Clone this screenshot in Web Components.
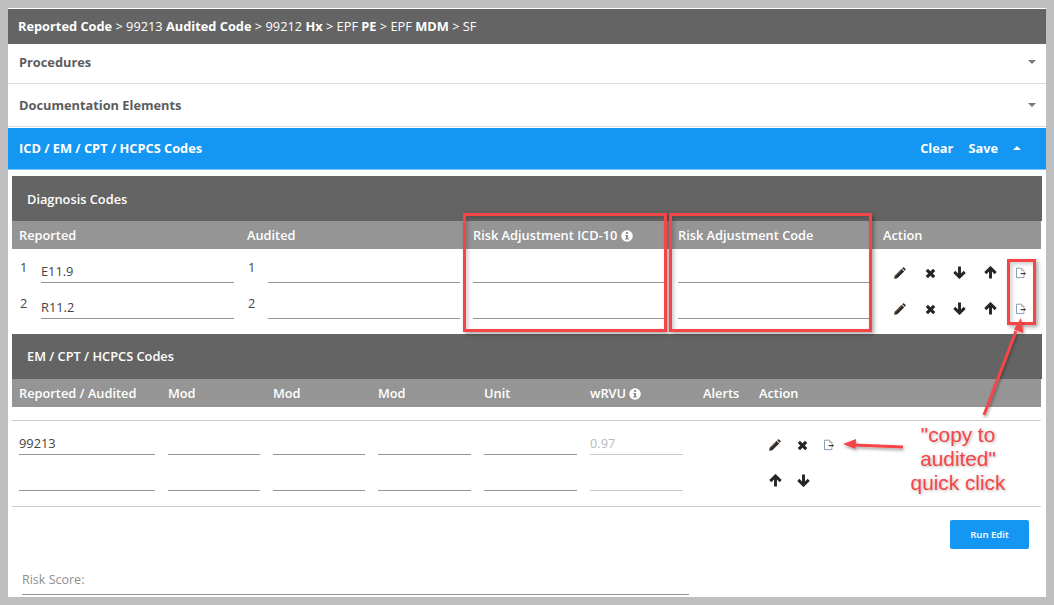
<!DOCTYPE html>
<html lang="en"><head><meta charset="utf-8"><title>Codes</title>
<style>
html,body{margin:0;height:605px;overflow:hidden;background:#bfbfbf}
body{padding:8px;box-sizing:border-box;font-family:"Open Sans","Liberation Sans",sans-serif;font-size:13px;color:#555}
</style></head><body>
<x-page>
  <x-titlebar><b>Reported Code</b> &gt; 99213 <b>Audited Code</b> &gt; 99212 <b>Hx</b> &gt; EPF <b>PE</b> &gt; EPF <b>MDM</b> &gt; SF</x-titlebar>
  <x-accordion h="39" nudge>Procedures</x-accordion>
  <x-accordion h="42">Documentation Elements</x-accordion>
  <x-accordion active h="41">ICD / EM / CPT / HCPCS Codes</x-accordion>
  <x-panel>
    <x-section down>Diagnosis Codes</x-section>
    <x-grid cols="228px 226px 205px 205px 165px" head>
      <span>Reported</span><span>Audited</span><span>Risk Adjustment ICD-10 <x-icon name="info"></x-icon></span><span>Risk Adjustment Code</span><span>Action</span>
    </x-grid>
    <x-grid cols="228px 226px 205px 205px 165px" rows="34px 36px" pad="15">
      <x-field num="1" value="E11.9"></x-field><x-field num="1" wide></x-field><x-field></x-field><x-field></x-field>
      <x-actions w="30.2" off="9" icons="pencil times down up file"></x-actions>
      <x-field num="2" value="R11.2"></x-field><x-field num="2" wide></x-field><x-field></x-field><x-field></x-field>
      <x-actions w="30.2" off="9" icons="pencil times down up file"></x-actions>
    </x-grid>
    <x-section up>EM / CPT / HCPCS Codes</x-section>
    <x-grid cols="149px 105px 105px 106px 106px 113px 56px 277px" head>
      <span>Reported / Audited</span><span>Mod</span><span>Mod</span><span>Mod</span><span>Unit</span><span>wRVU <x-icon name="info"></x-icon></span><span>Alerts</span><span>Action</span>
    </x-grid>
    <x-grid cols="149px 105px 105px 106px 106px 113px 56px 277px" rows="34px 36px" pad="15" lined>
      <x-field value="99213"></x-field><x-field></x-field><x-field></x-field><x-field></x-field><x-field></x-field><x-field value="0.97" muted gap="13"></x-field><span></span>
      <x-actions w="27" off="9.5" icons="pencil times file"></x-actions>
      <x-field></x-field><x-field></x-field><x-field></x-field><x-field></x-field><x-field></x-field><x-field muted gap="13"></x-field><span></span>
      <x-actions w="28" off="9.5" icons="up down"></x-actions>
    </x-grid>
    <x-footer>
      <x-button>Run Edit</x-button>
      <x-score>Risk Score:</x-score>
    </x-footer>
  </x-panel>
  <x-annotations></x-annotations>
</x-page>
<script>
const ICONS={
 pencil:'<svg viewBox="0 0 14 14" width="13" height="13" style="margin-right:2px"><path d="M1 13l.8-3.6 7.4-7.4 2.8 2.8-7.4 7.4z" fill="#2b2b2b"/><path d="M9.9 1.3l.9-.8c.4-.3.8-.3 1.1 0l1.6 1.6c.3.3.3.7 0 1.1l-.8.9z" fill="#2b2b2b"/><path d="M2.9 9.3l6.6-6.6" stroke="#b08050" stroke-width=".8"/><path d="M1 13l.6-2.4 1.8 1.8z" fill="#b58a55"/></svg>',
 times:'<svg viewBox="0 0 12 12" width="11" height="11"><path d="M2 2l8 8M10 2l-8 8" stroke="#262626" stroke-width="3.4" fill="none"/></svg>',
 down:'<svg viewBox="0 0 12 12" width="13" height="13" style="margin:0 1px 1px 0"><path d="M6 .5v9.5M1.2 5.4L6 10.2l4.8-4.8" stroke="#262626" stroke-width="2.7" fill="none"/></svg>',
 up:'<svg viewBox="0 0 12 12" width="13" height="13" style="margin-bottom:1px"><path d="M6 11.5V2M1.2 6.6L6 1.8l4.8 4.8" stroke="#262626" stroke-width="2.7" fill="none"/></svg>',
 file:'<svg viewBox="0 0 12 12" width="12" height="12"><path d="M1.5 1.2h5l2.4 2.4v1.2M8.9 8.4v2.2H1.5V1.2" stroke="#7f93b0" stroke-width=".9" fill="#fff"/><path d="M6.5 1.2v2.4h2.4" stroke="#d0a56c" stroke-width=".8" fill="none"/><path d="M5.6 6.6h3.6" stroke="#333" stroke-width="1.1"/><path d="M8.8 5l2.2 1.6-2.2 1.6z" fill="#333"/></svg>',
 info:'<svg viewBox="0 0 12 12" width="12" height="12" style="vertical-align:-1.5px"><circle cx="6" cy="6" r="5.8" fill="#fff"/><rect x="4.9" y="2.1" width="2.2" height="1.9" fill="#8f8f8f"/><path d="M4.1 5h3v3.6h.9v1H4.1v-1H5V6h-.9z" fill="#8f8f8f"/></svg>'
};
function def(tag,css,html,init){
  customElements.define(tag,class extends HTMLElement{
    connectedCallback(){
      if(this.shadowRoot)return;
      const r=this.attachShadow({mode:'open'});
      r.innerHTML='<style>'+css+'</style>'+(typeof html==='function'?html(this):html);
      if(init)init(this,r);
    }
  });
}
def('x-page',':host{display:block;position:relative;width:1038px;height:589px;background:#fff;padding-top:1px;box-sizing:border-box;overflow:hidden}','<slot></slot>');
def('x-titlebar',':host{display:flex;align-items:center;white-space:pre;height:35px;box-sizing:border-box;padding:0 10px 2px;background:#646464;color:#fff;font-size:12.8px;font-weight:400}','<div><slot></slot></div>');
def('x-accordion',`:host{display:flex;align-items:center;padding:0 10px 0 11px;box-sizing:border-box;border-bottom:1px solid #ddd;color:#5c5c5c;font-weight:700;font-size:12.8px}
:host([nudge]){padding-bottom:3px}
:host([active]){background:#1496f3;color:#fff;border-bottom:1px solid #7cc3f7;margin-top:1px;padding-bottom:2px}
.t{flex:1}.c{width:0;height:0;border:4px solid transparent;border-top:4px solid #777;border-bottom:0}
.links{display:flex;align-items:center;font-size:12.8px}.links span:first-child{margin-right:15px}
.u{width:0;height:0;border:4px solid transparent;border-bottom:4px solid #fff;border-top:0;margin:0 15px 0 15px}`,
 h=>'<div class="t"><slot></slot></div>'+(h.hasAttribute('active')?'<div class="links"><span>Clear</span><span>Save</span><div class="u"></div></div>':'<div class="c"></div>'),
 h=>{h.style.height=(+h.getAttribute('h')+1)+'px'});
def('x-panel',':host{display:block;padding:6px 5px 0 4px}','<slot></slot>');
def('x-section',':host{display:flex;align-items:center;height:45px;width:1030px;padding-left:15px;box-sizing:border-box;background:#646464;color:#fff;font-weight:600;font-size:12.8px}:host([down]){padding-top:1px}:host([up]){padding-bottom:2px}','<slot></slot>');
def('x-grid',`:host{display:grid;width:1029px;box-sizing:border-box}
:host([head]){background:#959595;color:#fff;font-weight:600;font-size:12.8px;height:28px;align-items:center}
::slotted(span){padding-left:7px;white-space:nowrap}
:host([lined]){border-top:1px solid #ccc;border-bottom:1px solid #ccc;margin-top:13px}`,'<slot></slot>',
 g=>{g.style.gridTemplateColumns=g.getAttribute('cols');
  if(g.hasAttribute('rows'))g.style.gridTemplateRows=g.getAttribute('rows');
  if(g.hasAttribute('pad'))g.style.paddingBottom=g.getAttribute('pad')+'px';});
def('x-field',`:host{display:flex;align-items:flex-end;padding:0 6px 0 7px;color:#555;font-size:12.8px;min-width:0}
.n{width:22px;flex:none;padding-left:1px;box-sizing:border-box;align-self:flex-end;margin-bottom:8px;line-height:16px;color:#444}
.w{flex:1;min-width:0;border-bottom:1px solid #959595;height:20px;line-height:18px;color:#444}
:host([wide]) .n{width:21px}
:host([muted]) .w{color:#bbb;border-bottom-color:#c8c8c8}`,
 f=>(f.hasAttribute('num')?'<span class="n">'+f.getAttribute('num')+'</span>':'')+'<div class="w">'+(f.getAttribute('value')||'')+'</div>',
 f=>{if(f.hasAttribute('gap'))f.style.paddingRight=f.getAttribute('gap')+'px'});
def('x-actions',`:host{display:flex;align-self:end;height:20px}
span{display:flex;align-items:center;justify-content:center;flex:none}`,
 a=>a.getAttribute('icons').split(' ').map(n=>'<span style="width:'+a.getAttribute('w')+'px">'+ICONS[n]+'</span>').join(''),
 a=>{a.style.paddingLeft=a.getAttribute('off')+'px'});
def('x-icon',':host{display:inline-block;line-height:0}',i=>ICONS[i.getAttribute('name')]);
def('x-footer',':host{display:flex;flex-direction:column;width:1029px;padding-top:13px}','<slot></slot>');
def('x-button',':host{align-self:flex-end;margin-right:12px;width:79px;height:29px;padding-bottom:1px;box-sizing:border-box;display:flex;align-items:center;justify-content:center;background:#1496f3;border-radius:2px;color:#fff;font-size:9.6px;font-weight:600}','<slot></slot>');
def('x-score',':host{display:block;margin:21px 0 0 10px;width:667px;height:24px;line-height:20px;border-bottom:1px solid #959595;color:#8f8f8f;font-size:12.5px}','<slot></slot>');
def('x-annotations',`:host{position:absolute;left:-8px;top:-8px;width:1054px;height:605px;pointer-events:none}
.b{position:absolute;box-sizing:border-box;border:3px solid #f64548;box-shadow:2px 2px 4px rgba(0,0,0,.35),inset 2px 2px 4px rgba(0,0,0,.2)}
svg{position:absolute;left:0;top:0;overflow:visible}
.t{position:absolute;left:880px;top:423px;width:156px;text-align:center;color:#f64548;font:20.8px/24px "Liberation Sans",sans-serif;text-shadow:1px 1px 3px rgba(0,0,0,.3)}`,
 `<div class="b" style="left:463px;top:213px;width:204px;height:119px"></div>
  <div class="b" style="left:669px;top:213px;width:203px;height:119px"></div>
  <div class="b" style="left:1007px;top:259px;width:29px;height:66px"></div>
  <svg width="1054" height="605"><defs><filter id="s" x="-30%" y="-30%" width="160%" height="160%"><feDropShadow dx="1" dy="2" stdDeviation="1.5" flood-color="#000" flood-opacity=".35"/></filter></defs>
  <g filter="url(#s)" fill="#f64548" stroke="none">
   <path d="M984 415L1016 331" stroke="#f64548" stroke-width="3"/><path d="M1021 318l2.5 15-9.5-3.6z"/>
   <path d="M903 447L854 445" stroke="#f64548" stroke-width="3"/><path d="M843 444l13-5-.4 10z"/></g></svg>
  <div class="t">"copy to<br>audited"<br>quick click</div>`);
</script>
</body></html>
